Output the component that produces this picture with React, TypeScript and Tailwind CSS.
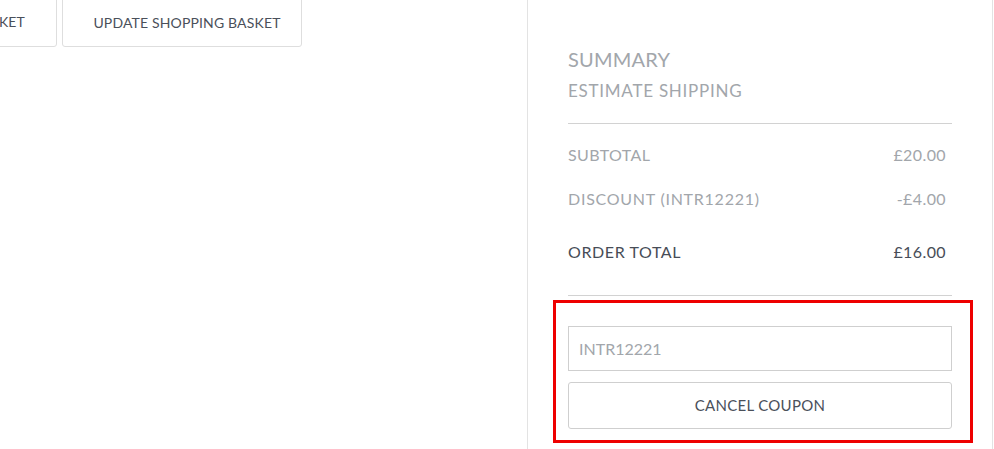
export default function App() {
  return (
    <div className="flex w-[994px] h-[449px] overflow-hidden bg-white font-['Lato','Liberation_Sans',sans-serif]">
      {/* basket actions */}
      <div className="w-[527px] shrink-0">
        <div className="flex justify-end gap-[5px] w-[302px] -mt-[4px]">
          <button className="shrink-0 h-[51px] px-[31px] border border-[#dedede] rounded-[3px] text-[14px] text-[#4a505a] tracking-[0.15px]">
            CLEAR SHOPPING BASKET
          </button>
          <button className="shrink-0 w-[240px] h-[51px] pt-[1px] pl-[10px] border border-[#dedede] rounded-[3px] text-[14px] text-[#4a505a] tracking-[0.15px]">
            UPDATE SHOPPING BASKET
          </button>
        </div>
      </div>

      {/* summary */}
      <div className="w-[466px] shrink-0 border-l border-r border-[#e3e3e3] px-[40px] pt-[46px]">
        <h2 className="text-[20px] leading-[26px] text-[#a2a6ab] tracking-[0.2px]">SUMMARY</h2>
        <div className="mt-[9px] text-[17px] leading-[20px] text-[#a2a6ab] tracking-[0.75px]">ESTIMATE SHIPPING</div>
        <div className="mt-[22px] border-t border-[#d2d2d2]" />

        <div className="pr-[6px] text-[16px] leading-[20px] tracking-[0.4px]">
          <div className="mt-[21px] flex justify-between text-[#a2a6ab]">
            <span>SUBTOTAL</span>
            <span>£20.00</span>
          </div>
          <div className="mt-[24px] flex justify-between text-[#a2a6ab]">
            <span className="tracking-[0.75px]">DISCOUNT (INTR12221)</span>
            <span>-£4.00</span>
          </div>
          <div className="mt-[33px] flex justify-between text-[#474d57]">
            <span className="tracking-[0.6px]">ORDER TOTAL</span>
            <span>£16.00</span>
          </div>
        </div>
        <div className="mt-[33px] border-t border-[#d2d2d2]" />

        <div className="mt-[4px] -ml-[15px] -mr-[21px] border-[3px] border-[#ee0000] pl-[12px] pr-[18px] pt-[23px] pb-[11px]">
          <input
            readOnly
            value="INTR12221"
            className="w-full h-[45px] border border-[#cfcfcf] px-[10px] text-[16px] text-[#a2a6ab] outline-none"
          />
          <button className="mt-[11px] w-full h-[47px] border border-[#cfcfcf] rounded-[3px] text-[15px] text-[#4a505a] tracking-[0.3px]">
            CANCEL COUPON
          </button>
        </div>
      </div>
    </div>
  );
}
